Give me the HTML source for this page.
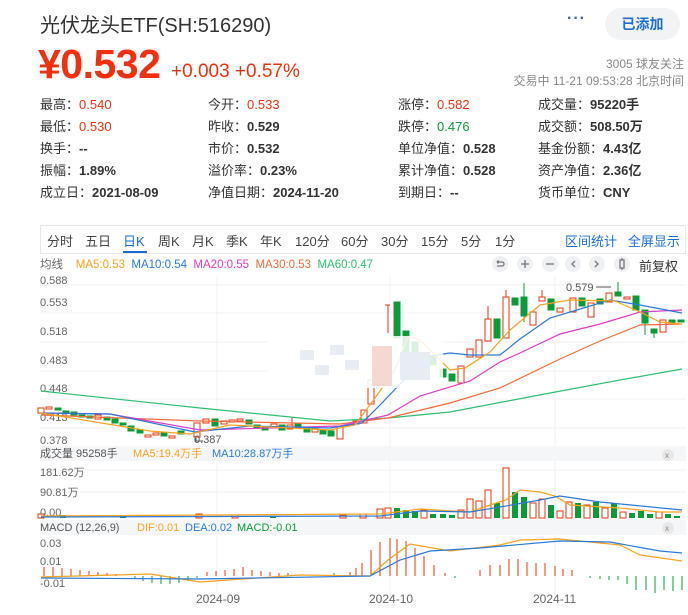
<!DOCTYPE html>
<html><head><meta charset="utf-8"><style>
*{margin:0;padding:0;box-sizing:border-box}
body{width:688px;height:615px;background:#fff;font-family:"Liberation Sans","Noto Sans CJK SC",sans-serif;position:relative;overflow:hidden;color:#333}
.a{position:absolute;white-space:nowrap}
.r{color:#f2300f}.g{color:#0c9b39}.b{color:#1a6dd7}
b{font-weight:bold}
.tb{position:absolute;top:231px;font-size:13px;color:#444;white-space:nowrap}
</style></head><body>
<div class="a" style="left:40px;top:9px;font-size:20px;color:#333">光伏龙头ETF(SH:516290)</div>
<div class="a" style="left:567px;top:10px;font-size:16px;color:#3a5ea8;font-weight:bold;letter-spacing:1px">···</div>
<div class="a" style="left:605px;top:8px;width:75px;height:32px;border-radius:16px;background:#f2f3f5;color:#1a6dd7;font-size:14px;line-height:32px;text-align:center;font-weight:bold">已添加</div>
<div class="a r" style="left:38px;top:41px;font-size:41px;font-weight:bold;letter-spacing:-0.5px">¥0.532</div>
<div class="a r" style="left:171px;top:61px;font-size:19px">+0.003 +0.57%</div>
<div class="a" style="right:4px;top:55px;font-size:12px;color:#888">3005 球友关注</div>
<div class="a" style="right:4px;top:72px;font-size:12px;color:#888">交易中 11-21 09:53:28 北京时间</div>

<div class="a" style="left:40px;top:94px;font-size:13px;line-height:22px">最高：<span class="r">0.540</span><br>最低：<span class="r">0.530</span><br>换手：<b>--</b><br>振幅：<b>1.89%</b><br>成立日：<b>2021-08-09</b></div>
<div class="a" style="left:208px;top:94px;font-size:13px;line-height:22px">今开：<span class="r">0.533</span><br>昨收：<b>0.529</b><br>市价：<b>0.532</b><br>溢价率：<b>0.23%</b><br>净值日期：<b>2024-11-20</b></div>
<div class="a" style="left:398px;top:94px;font-size:13px;line-height:22px">涨停：<span class="r">0.582</span><br>跌停：<span class="g">0.476</span><br>单位净值：<b>0.528</b><br>累计净值：<b>0.528</b><br>到期日：<b>--</b></div>
<div class="a" style="left:538px;top:94px;font-size:13px;line-height:22px">成交量：<b>95220手</b><br>成交额：<b>508.50万</b><br>基金份额：<b>4.43亿</b><br>资产净值：<b>2.36亿</b><br>货币单位：<b>CNY</b></div>

<div class="a" style="left:40px;top:225px;width:646px;height:29px;border:1px solid #e8e8e8"></div>
<span class="tb" style="left:47px">分时</span><span class="tb" style="left:85px">五日</span><span class="tb b" style="left:123px;color:#1a6dd7">日K</span><span class="tb" style="left:158px">周K</span><span class="tb" style="left:192px">月K</span><span class="tb" style="left:226px">季K</span><span class="tb" style="left:260px">年K</span><span class="tb" style="left:295px">120分</span><span class="tb" style="left:341px">60分</span><span class="tb" style="left:381px">30分</span><span class="tb" style="left:421px">15分</span><span class="tb" style="left:461px">5分</span><span class="tb" style="left:495px">1分</span>
<div class="a" style="left:123px;top:251px;width:24px;height:2px;background:#1a6dd7"></div>
<div class="a b" style="left:565px;top:231px;font-size:13px">区间统计&nbsp;&nbsp;&nbsp;全屏显示</div>
<div class="a" style="left:40px;top:256px;font-size:11.5px;color:#666">均线&nbsp;&nbsp;&nbsp;&nbsp;<span style="color:#f7a31f">MA5:0.53</span>&nbsp;&nbsp;<span style="color:#2a7ad8">MA10:0.54</span>&nbsp;&nbsp;<span style="color:#e23bc7">MA20:0.55</span>&nbsp;&nbsp;<span style="color:#f46c3c">MA30:0.53</span>&nbsp;&nbsp;<span style="color:#2fbf74">MA60:0.47</span></div>
<svg class="a" style="left:490px;top:254px" width="140" height="20">
<g fill="#eef0f3"><circle cx="10" cy="10" r="8"/><circle cx="35" cy="10" r="8"/><circle cx="60" cy="10" r="8"/><circle cx="83" cy="10" r="8"/><circle cx="107" cy="10" r="8"/><circle cx="132" cy="10" r="8"/></g>
<g stroke="#777" stroke-width="1.3" fill="none"><path d="M7 8h5a2 2 0 0 1 0 4H7M7 8l1.5-1.5M7 8l1.5 1.5"/><path d="M31 10h8M35 6v8"/><path d="M56 10h8"/><path d="M85 7l-3 3 3 3"/><path d="M105 7l3 3-3 3"/><rect x="130" y="6" width="4" height="8"/><path d="M132 4v2M132 14v2"/></g></svg>
<div class="a" style="left:639px;top:256px;font-size:13px;color:#333">前复权</div>

<svg class="a" style="left:0;top:270px" width="688" height="345" font-family="Liberation Sans" font-size="11" fill="#666">
<g transform="translate(0,-270)">
<g stroke="#f0f0f0" stroke-width="1"><path d="M40 285H686M40 313H686M40 342H686M40 371H686M40 399H686M40 428H686M217 275V600M390 275V600M555 275V600M40 470H686M40 492H686"/></g>
<text x="40" y="284">0.588</text><text x="40" y="306">0.553</text><text x="40" y="335">0.518</text><text x="40" y="364">0.483</text><text x="40" y="392">0.448</text><text x="40" y="421">0.413</text><text x="40" y="444">0.378</text>
<g stroke-width="1">
<g fill="#fff" stroke="#e8340f">
<rect x="38" y="408" width="6" height="5"/><rect x="46" y="407" width="6" height="2"/><rect x="95" y="415" width="6" height="4"/><rect x="145" y="435" width="6" height="2"/><rect x="153" y="433" width="6" height="2"/><rect x="169" y="436" width="6" height="2"/><rect x="194" y="423" width="6" height="14"/><rect x="203" y="419" width="6" height="4"/><rect x="221" y="421" width="6" height="3"/><rect x="229" y="420" width="6" height="2"/><rect x="237" y="419" width="6" height="2"/><rect x="271" y="424" width="6" height="4"/><rect x="287" y="425" width="6" height="4"/><rect x="312" y="428" width="6" height="4"/><rect x="337" y="426" width="6" height="13"/><rect x="353" y="421" width="6" height="3"/><rect x="361" y="410" width="6" height="13"/><rect x="368" y="380" width="6" height="24"/><rect x="377" y="352" width="6" height="28"/><rect x="421" y="357" width="6" height="3"/><rect x="458" y="366" width="6" height="17"/><rect x="467" y="349" width="6" height="8"/><rect x="476" y="340" width="6" height="17"/><rect x="485" y="319" width="6" height="22"/><rect x="503" y="297" width="6" height="41"/><rect x="530" y="312" width="6" height="13"/><rect x="539" y="297" width="6" height="4"/><rect x="557" y="308" width="6" height="4"/><rect x="570" y="298" width="6" height="14"/><rect x="588" y="303" width="6" height="14"/><rect x="606" y="293" width="6" height="9"/><rect x="624" y="297" width="6" height="2"/><rect x="660" y="320" width="6" height="12"/>
<path d="M388 305V333M385 305h5M488 306V319M506 290V297M542 290V297M292 417V425"/>
</g>
<g fill="#0c9b39" stroke="#0c9b39">
<rect x="55" y="408" width="6" height="2"/><rect x="63" y="411" width="6" height="2"/><rect x="71" y="412" width="6" height="3"/><rect x="79" y="415" width="6" height="2"/><rect x="87" y="416" width="6" height="2"/><rect x="104" y="417" width="6" height="3"/><rect x="112" y="419" width="6" height="4"/><rect x="120" y="423" width="6" height="2"/><rect x="128" y="426" width="6" height="5"/><rect x="137" y="430" width="6" height="3"/><rect x="161" y="433" width="6" height="3"/><rect x="178" y="431" width="6" height="3"/><rect x="212" y="419" width="6" height="7"/><rect x="246" y="420" width="6" height="4"/><rect x="254" y="425" width="6" height="3"/><rect x="262" y="427" width="6" height="3"/><rect x="279" y="425" width="6" height="5"/><rect x="295" y="424" width="6" height="4"/><rect x="304" y="428" width="6" height="4"/><rect x="320" y="430" width="6" height="4"/><rect x="328" y="431" width="6" height="5"/><rect x="394" y="302" width="6" height="36"/><rect x="403" y="331" width="6" height="23"/><rect x="412" y="342" width="6" height="25"/><rect x="430" y="357" width="6" height="8"/><rect x="440" y="369" width="6" height="8"/><rect x="449" y="374" width="6" height="7"/><rect x="494" y="319" width="6" height="19"/><rect x="512" y="298" width="6" height="7"/><rect x="521" y="297" width="6" height="19"/><rect x="548" y="299" width="6" height="11"/><rect x="579" y="298" width="6" height="8"/><rect x="597" y="299" width="6" height="5"/><rect x="615" y="292" width="6" height="4"/><rect x="633" y="296" width="6" height="14"/><rect x="642" y="310" width="6" height="13"/><rect x="651" y="329" width="6" height="4"/><rect x="669" y="320" width="6" height="3"/><rect x="678" y="320" width="6" height="2"/>
<path d="M618 282V296M524 283V297M524 316V322M645 323V335M654 333V338"/>
</g></g>
<g fill="none" stroke-width="1.2">
<path stroke="#2fbf74" d="M41 391L200 408L330 421L388 418L450 412L550 393L620 380L682 369"/>
<path stroke="#f46c3c" d="M41 415L200 421L340 424L388 418L450 403L500 388L560 359L600 341L640 325L682 324"/>
<path stroke="#e23bc7" d="M41 413L110 414L200 430L340 426L388 415L420 396L470 381L500 362L520 353L560 334L600 324L640 312L682 310"/>
<path stroke="#2a7ad8" d="M41 413L110 414L195 432L250 426L330 428L362 423L380 405L400 384L430 356L450 353L470 355L500 355L520 339L550 318L610 300L640 305L682 313"/>
<path stroke="#f7a31f" d="M41 413L150 431L190 434L230 425L330 430L355 425L375 398L395 370L408 337L420 340L450 370L465 368L490 352L510 330L540 305L570 300L615 301L640 312L660 322L682 324"/>
</g>
<path d="M611 287H596" stroke="#555"/><text x="566" y="291" fill="#555">0.579</text>
<path d="M196 438V441H203" stroke="#555" fill="none"/><text x="194" y="443" fill="#555">0.387</text>
<rect x="268" y="336" width="175" height="52" fill="#fff" opacity="0.85"/>
<g fill="#e8ecf3"><rect x="300" y="350" width="14" height="10"/><rect x="330" y="345" width="14" height="10"/><rect x="315" y="365" width="14" height="10"/><rect x="345" y="360" width="14" height="10"/><rect x="400" y="352" width="30" height="28"/></g>
<rect x="372" y="346" width="20" height="40" fill="#f6d7d2"/>
<rect x="40" y="446" width="646" height="15" fill="#f5f6f8"/>
<text x="40" y="457" fill="#555" font-size="11">成交量 95258手</text>
<text x="133" y="457" fill="#f7a31f">MA5:19.4万手</text><text x="212" y="457" fill="#2a7ad8">MA10:28.87万手</text>
<circle cx="668" cy="455" r="6" fill="#e8e8e8"/><text x="665" y="458" font-size="8" fill="#888">x</text>
<text x="40" y="476">181.62万</text><text x="40" y="496">90.81万</text><text x="40" y="516">0.00</text>
<g fill="#fff" stroke="#e8340f"><rect x="377" y="509" width="6" height="9"/><rect x="385" y="508" width="6" height="10"/><rect x="421" y="510" width="6" height="8"/><rect x="458" y="510" width="6" height="8"/><rect x="467" y="499" width="6" height="19"/><rect x="476" y="501" width="6" height="17"/><rect x="485" y="490" width="6" height="28"/><rect x="503" y="468" width="6" height="50"/><rect x="530" y="503" width="6" height="15"/><rect x="539" y="499" width="6" height="19"/><rect x="557" y="511" width="6" height="7"/><rect x="566" y="502" width="6" height="16"/><rect x="584" y="505" width="6" height="13"/><rect x="602" y="508" width="6" height="10"/><rect x="620" y="512" width="6" height="6"/><rect x="656" y="512" width="6" height="6"/><rect x="38" y="514" width="6" height="4"/><rect x="196" y="514" width="6" height="4"/><rect x="232" y="515" width="6" height="3"/><rect x="340" y="515" width="6" height="3"/><rect x="360" y="514" width="6" height="4"/></g>
<g fill="#0c9b39"><rect x="394" y="508" width="6" height="10"/><rect x="403" y="510" width="6" height="8"/><rect x="412" y="511" width="6" height="7"/><rect x="430" y="514" width="6" height="4"/><rect x="440" y="514" width="6" height="4"/><rect x="449" y="515" width="6" height="3"/><rect x="494" y="503" width="6" height="15"/><rect x="512" y="492" width="6" height="26"/><rect x="521" y="497" width="6" height="21"/><rect x="548" y="505" width="6" height="13"/><rect x="575" y="503" width="6" height="15"/><rect x="593" y="502" width="6" height="16"/><rect x="611" y="503" width="6" height="15"/><rect x="629" y="513" width="6" height="5"/><rect x="638" y="511" width="6" height="7"/><rect x="647" y="514" width="6" height="4"/><rect x="665" y="514" width="6" height="4"/><rect x="674" y="516" width="6" height="2"/><rect x="60" y="515" width="6" height="3"/><rect x="120" y="516" width="6" height="2"/><rect x="270" y="516" width="6" height="2"/></g>
<g fill="none" stroke-width="1.2"><path stroke="#f7a31f" d="M41 516L380 514L420 509L470 512L490 505L506 500L520 490L540 492L555 496L570 505L620 508L660 512L682 512"/><path stroke="#2a7ad8" d="M41 517L380 516L420 511L470 512L500 507L540 500L560 496L600 502L682 510"/></g>
<rect x="40" y="520" width="646" height="15" fill="#f5f6f8"/>
<text x="40" y="531" fill="#555">MACD (12,26,9)</text>
<text x="137" y="531" fill="#f7a31f">DIF:0.01</text><text x="185" y="531" fill="#2a7ad8">DEA:0.02</text><text x="237" y="531" fill="#0c9b39">MACD:-0.01</text>
<circle cx="668" cy="528" r="6" fill="#e8e8e8"/><text x="665" y="531" font-size="8" fill="#888">x</text>
<text x="40" y="547">0.03</text><text x="40" y="565">0.01</text><text x="40" y="587">-0.01</text>
<g stroke="#e8340f"><path d="M44 576V567M53 576V567M62 576V568M71 576V569M80 576V570M89 576V571M98 576V572M107 576V573M116 576V574M207 576V572M216 576V571M225 576V570M234 576V569M243 576V567M252 576V570M261 576V571M270 576V572M279 576V573M288 576V573M350 576V572M356 576V568M362 576V563M371 576V550M380 576V542M390 576V538M397 576V539M406 576V541M415 576V548M424 576V556M434 576V565M445 576V573M480 576V570M490 576V565M500 576V565M509 576V559M518 576V559M527 576V562M536 576V563M545 576V563M555 576V566M563 576V569M572 576V570"/></g>
<g stroke="#0c9b39"><path d="M135 576V579M143 576V581M152 576V583M161 576V584M170 576V584M179 576V583M188 576V581M197 576V578M334 576V573M455 576V578M590 576V578M600 576V579M609 576V580M618 576V580M627 576V584M636 576V590M646 576V590M655 576V593M664 576V590M673 576V591M682 576V590"/></g>
<g fill="none" stroke-width="1.2"><path stroke="#f7a31f" d="M41 577L150 574L200 582L300 575L370 576L388 560L410 544L450 551L500 545L520 540L560 539L620 545L640 555L682 561"/><path stroke="#2a7ad8" d="M41 578L200 579L370 576L400 560L430 551L480 548L560 541L610 542L660 551L682 553"/></g>
<text x="196" y="603" font-size="12">2024-09</text><text x="369" y="603" font-size="12">2024-10</text><text x="533" y="603" font-size="12">2024-11</text>
</g></svg>
</body></html>
